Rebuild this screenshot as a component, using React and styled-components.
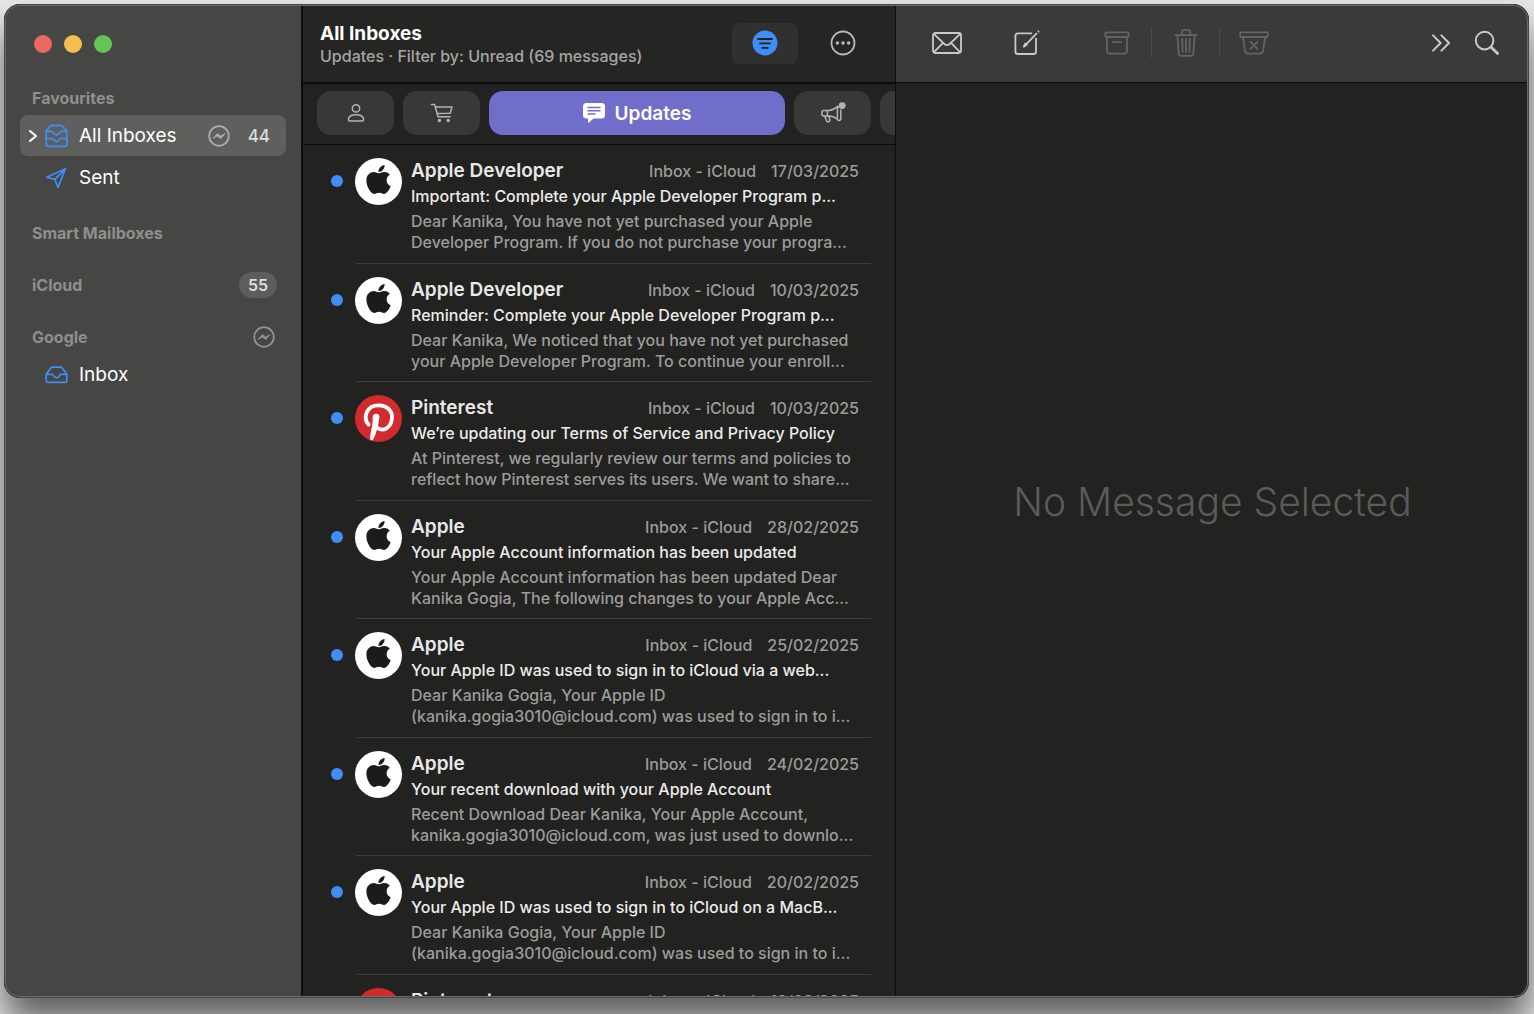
import styled, { createGlobalStyle } from "styled-components";
import { FaApple } from "react-icons/fa";

const GlobalStyle = createGlobalStyle`
* { box-sizing: border-box; }
body {
  margin: 0;
  background: #e8e8e8;
  font-family: Inter, "Liberation Sans", sans-serif;
  font-size: 16px;
  color: #fff;
  overflow: hidden;
}
button {
  border: 0;
  padding: 0;
  background: none;
  color: inherit;
  font: inherit;
}
h1, h2, h3, p, ul { margin: 0; padding: 0; }
svg { display: block; flex: none; }
`

const Desktop = styled.div`
display: flex;
height: 100vh;
padding: 4px 5px 16px 4px;
`

const Window = styled.div`
position: relative;
display: flex;
flex: 1;
min-width: 0;
overflow: hidden;
border-radius: 16px;
background: #222221;
box-shadow: 0 24px 36px rgba(0, 0, 0, 0.6);

&::after {
  content: "";
  position: absolute;
  inset: 0;
  border-radius: 16px;
  border: 1px solid #484847;
  box-shadow: inset 0 0 0 1px #6a6a69;
  pointer-events: none;
}
`

/* sidebar */

const Sidebar = styled.nav`
flex: none;
width: 299px;
background: #464645;
border-right: 2px solid #0c0c0c;
`

const Lights = styled.div`
display: flex;
gap: 12px;
height: 59px;
padding: 31px 0 0 30px;
`

const Light = styled.button`
width: 18px;
height: 18px;
border-radius: 50%;
background: ${({ $color }) => $color};
`

const SectionHead = styled.div`
display: flex;
align-items: center;
justify-content: space-between;
height: 34px;
margin-top: 18px;
padding: 0 26px 0 28px;
color: #8f8f8e;

h2 {
  font-size: 16px;
  font-weight: 700;
}
`

const Item = styled.a`
display: flex;
align-items: center;
height: 41px;
margin: 0 15px 0 16px;
padding: 0 16px 0 8px;
border-radius: 8px;
background: ${({ $selected }) => ($selected ? "#5f5f5e" : "transparent")};
color: #fff;
font-size: 19px;
text-decoration: none;
margin-bottom: ${({ $selected }) => ($selected ? "1px" : "0")};
`

const Arrow = styled.span`
width: 17px;
`

const ItemLabel = styled.span`
flex: 1;
margin-left: 11px;
`

const Count = styled.span`
margin-left: 18px;
color: #dcdcdc;
font-size: 17px;
font-weight: 500;
`

const Pill = styled.span`
padding: 0 9px;
margin-right: -2px;
border-radius: 13px;
background: #5d5d5c;
color: #dcdcdc;
font-size: 16px;
font-weight: 600;
line-height: 26px;
`

/* message list */

const ListPane = styled.section`
flex: none;
width: 593px;
overflow: hidden;
border-right: 1px solid #0c0c0c;
`

const ListHeader = styled.header`
display: flex;
align-items: center;
height: 80px;
padding: 0 38px 0 17px;
border-bottom: 2px solid #0c0c0c;
background: #252524;
`

const Heading = styled.div`
flex: 1;
padding-top: 4px;

h1 {
  font-size: 19px;
  font-weight: 700;
  line-height: 22px;
}
p {
  color: #a6a6a5;
  font-weight: 500;
  line-height: 22px;
}
`

const FilterButton = styled.button`
display: flex;
align-items: center;
justify-content: center;
width: 66px;
height: 41px;
margin-right: 31px;
border-radius: 8px;
background: #30302f;
`

const Tabs = styled.div`
display: flex;
gap: 9px;
height: 61px;
padding: 7px 0 0 14px;
overflow: hidden;
border-bottom: 1px solid #0c0c0c;
`

const Tab = styled.button`
display: flex;
flex: none;
align-items: center;
justify-content: center;
gap: 10px;
width: ${({ $active }) => ($active ? "296px" : "77px")};
height: 44px;
border-radius: 14px;
background: ${({ $active }) => ($active ? "#706dcb" : "#383837")};
color: ${({ $active }) => ($active ? "#fff" : "#b4b4b3")};
font-size: 19px;
font-weight: 600;
`

const Messages = styled.ul`
list-style: none;
`

const Row = styled.li`
display: flex;
padding: 13px 24px 0 28px;

&:nth-child(even) article {
  padding-bottom: 9px;
}
`

const Unread = styled.span`
flex: none;
width: 12px;
height: 12px;
margin: 17px 12px 0 0;
border-radius: 50%;
background: #3f8ef8;
`

const Avatar = styled.span`
display: flex;
flex: none;
align-items: center;
justify-content: center;
width: 47px;
height: 47px;
padding-bottom: ${({ $brand }) => ($brand === "apple" ? "4px" : "0")};
border-radius: 50%;
background: ${({ $brand }) => ($brand === "pinterest" ? "#d32a2e" : "#fff")};
color: #1b1b1b;
`

const Body = styled.article`
position: relative;
flex: 1;
min-width: 0;
padding: 0 12px 10px 9px;
border-bottom: 1px solid #3d3d3c;

/* the rule under a message runs on below its avatar */
&::before {
  content: "";
  position: absolute;
  bottom: -1px;
  left: -46px;
  width: 46px;
  height: 1px;
  background: #3d3d3c;
}
`

const Top = styled.div`
display: flex;
align-items: baseline;
height: 25px;
line-height: 25px;
color: #9c9c9b;
font-weight: 500;

h3 {
  flex: 1;
  color: #e8e8e7;
  font-size: 19px;
  font-weight: 600;
}
time { margin-left: 15px; }
`

const Subject = styled.p`
color: #ececeb;
font-weight: 500;
line-height: 26px;
white-space: nowrap;
`

const Preview = styled.p`
margin-top: 2px;
color: #9c9c9b;
font-weight: 500;
line-height: 21px;
white-space: pre;
`

/* reader */

const Reader = styled.main`
display: flex;
flex: 1;
flex-direction: column;
min-width: 0;
`

const Toolbar = styled.header`
display: flex;
align-items: center;
height: 79px;
padding: 0 19px 0 11px;
border-bottom: 1px solid #0c0c0c;
background: #3a3a39;
`

const Tool = styled.button`
display: flex;
align-items: center;
justify-content: center;
width: ${({ $width }) => $width}px;
height: 40px;
color: ${({ disabled }) => (disabled ? "#646463" : "#c9c9c8")};
`

const Divider = styled.span`
width: 1px;
height: 30px;
background: #4a4a49;
`

const Space = styled.span`
flex: ${({ $size }) => ($size ? `0 0 ${$size}px` : 1)};
`

const Empty = styled.div`
display: flex;
flex: 1;
align-items: center;
justify-content: center;
padding-bottom: 78px;
color: #5b5b5a;
font-size: 39px;
font-weight: 300;
`

const Icon = ({ w, h, stroke = 2, color = "currentColor", children }) => (
  <svg width={w} height={h} viewBox={`0 0 ${w} ${h}`} fill="none" stroke={color}
    strokeWidth={stroke} strokeLinecap="round" strokeLinejoin="round" aria-hidden="true">
    {children}
  </svg>
);

const BLUE = "#3f8ef8";

const TrayIcon = () => (
  <Icon w={23} h={18} stroke={1.7} color={BLUE}>
    <path d="M1.2 8.2 5.6 2.2Q6.3 1.2 7.5 1.2H15.5Q16.7 1.2 17.4 2.2L21.8 8.2V14.2Q21.8 16.4 19.6 16.4H3.4Q1.2 16.4 1.2 14.2ZM1.2 8.4H7.2C8.6 8.4 8.6 11.8 11.5 11.8S14.4 8.4 15.8 8.4H21.8" />
  </Icon>
);

const TraysIcon = () => (
  <Icon w={23} h={24} stroke={1.7} color={BLUE}>
    <path d="M1.2 7 5.2 2.4Q6 1.3 7.3 1.3H15.7Q17 1.3 17.8 2.4L21.8 7V20.2Q21.8 22.4 19.6 22.4H3.4Q1.2 22.4 1.2 20.2Z" />
    <path d="M1.2 7.4H6.8C8.6 7.4 8.2 10.8 11.5 10.8S14.4 7.4 16.2 7.4H21.8M1.2 14.6H7.4C8.8 14.6 8.8 17.6 11.5 17.6S14.2 14.6 15.6 14.6H21.8" />
  </Icon>
);

const SentIcon = () => (
  <Icon w={23} h={22} stroke={1.7} color={BLUE}>
    <path d="M20.5 1.8 1.8 10.2 9.8 12.4 13 20.4ZM20.5 1.8 9.8 12.4" />
  </Icon>
);

const StatusIcon = ({ color }) => (
  <Icon w={22} h={22} stroke={1.8} color={color}>
    <circle cx="11" cy="11" r="9.8" />
    <path d="M5.4 13.2 9.2 8.8 12.8 11.2 16.8 8.8 12.8 13.4 9.4 11.1Z" fill={color} strokeWidth="1" />
  </Icon>
);

const PinterestMark = () => (
  <Icon w={47} h={47} stroke={3.8} color="#fff">
    <path d="M13.6 29.6C10.6 26.4 9.8 21.4 12 16.8 14.6 12 19.2 10.2 24.2 10.4 31.6 10.6 37.2 15.2 37 22.2 36.8 29.4 32.6 34.8 27 34.6 24.2 34.5 21.8 33 20.8 30.6" />
    <path d="M17.6 22C17.8 17.8 24.6 17.4 24.4 22 24 27 21.4 38.6 18.6 43.8 17.4 45.8 15.2 45.8 15.2 43.8 14.8 38.6 18.6 28 17.6 22Z" fill="#fff" stroke="none" />
  </Icon>
);

const MESSAGES = [
  ["apple", "Apple Developer", "17/03/2025", "Important: Complete your Apple Developer Program p...",
    "Dear Kanika, You have not yet purchased your Apple\nDeveloper Program. If you do not purchase your progra..."],
  ["apple", "Apple Developer", "10/03/2025", "Reminder: Complete your Apple Developer Program p...",
    "Dear Kanika, We noticed that you have not yet purchased\nyour Apple Developer Program. To continue your enroll..."],
  ["pinterest", "Pinterest", "10/03/2025", "We’re updating our Terms of Service and Privacy Policy",
    "At Pinterest, we regularly review our terms and policies to\nreflect how Pinterest serves its users. We want to share..."],
  ["apple", "Apple", "28/02/2025", "Your Apple Account information has been updated",
    "Your Apple Account information has been updated Dear\nKanika Gogia, The following changes to your Apple Acc..."],
  ["apple", "Apple", "25/02/2025", "Your Apple ID was used to sign in to iCloud via a web...",
    "Dear Kanika Gogia, Your Apple ID\n(kanika.gogia3010@icloud.com) was used to sign in to i..."],
  ["apple", "Apple", "24/02/2025", "Your recent download with your Apple Account",
    "Recent Download Dear Kanika, Your Apple Account,\nkanika.gogia3010@icloud.com, was just used to downlo..."],
  ["apple", "Apple", "20/02/2025", "Your Apple ID was used to sign in to iCloud on a MacB...",
    "Dear Kanika Gogia, Your Apple ID\n(kanika.gogia3010@icloud.com) was used to sign in to i..."],
  ["pinterest", "Pinterest", "18/02/2025", "", ""],
];

const Message = ({ brand, from, date, subject, preview }) => (
  <Row>
    <Unread />
    <Avatar $brand={brand}>
      {brand === "apple" ? <FaApple size={33} /> : <PinterestMark />}
    </Avatar>
    <Body>
      <Top>
        <h3>{from}</h3>
        <span>Inbox - iCloud</span>
        <time>{date}</time>
      </Top>
      <Subject>{subject}</Subject>
      <Preview>{preview}</Preview>
    </Body>
  </Row>
);

const MailSidebar = () => (
  <Sidebar>
    <Lights>
      <Light $color="#ea6962" aria-label="Close" />
      <Light $color="#f5bf4f" aria-label="Minimise" />
      <Light $color="#62c554" aria-label="Zoom" />
    </Lights>
    <SectionHead><h2>Favourites</h2></SectionHead>
    <Item href="#all" $selected>
      <Arrow>
        <Icon w={10} h={14}><path d="M2 2 8 7 2 12" /></Icon>
      </Arrow>
      <TraysIcon />
      <ItemLabel>All Inboxes</ItemLabel>
      <StatusIcon color="#acacab" />
      <Count>44</Count>
    </Item>
    <Item href="#sent">
      <Arrow />
      <SentIcon />
      <ItemLabel>Sent</ItemLabel>
    </Item>
    <SectionHead><h2>Smart Mailboxes</h2></SectionHead>
    <SectionHead><h2>iCloud</h2><Pill>55</Pill></SectionHead>
    <SectionHead><h2>Google</h2><StatusIcon color="#929291" /></SectionHead>
    <Item href="#inbox">
      <Arrow />
      <TrayIcon />
      <ItemLabel>Inbox</ItemLabel>
    </Item>
  </Sidebar>
);

const CategoryTabs = () => (
  <Tabs>
    <Tab aria-label="Primary">
      <Icon w={18} h={20} stroke={1.5}>
        <circle cx="9" cy="5.4" r="3.7" />
        <path d="M1.4 16.4C1.6 13.4 4.8 11.8 9 11.8S16.4 13.4 16.6 16.4Q16.6 18 15 18H3Q1.4 18 1.4 16.4Z" />
      </Icon>
    </Tab>
    <Tab aria-label="Transactions">
      <Icon w={24} h={20} stroke={1.5}>
        <path d="M1.4 1.4H4.6L8 13.8H20M5.6 4H22L20.2 10.2 7.2 10.6" />
        <circle cx="9.4" cy="17.6" r="1" fill="currentColor" />
        <circle cx="18.2" cy="17.6" r="1" fill="currentColor" />
      </Icon>
    </Tab>
    <Tab $active>
      <svg width="22" height="20" viewBox="0 0 22 20" aria-hidden="true">
        <path d="M3.5 0H18.5Q22 0 22 3.5V12Q22 15.5 18.5 15.5H10.5L6 19.6Q5 20.2 5 19V15.5H3.5Q0 15.5 0 12V3.5Q0 0 3.5 0Z" fill="#fff" />
        <path d="M5 4.5H17M5 7.8H17M5 11H12" stroke="#706dcb" strokeWidth="1.4" strokeLinecap="round" />
      </svg>
      Updates
    </Tab>
    <Tab aria-label="Promotions">
      <Icon w={26} h={22} stroke={1.5}>
        <path d="M3.6 8.4H8.6C12 8.4 15 6.6 17.4 4.4V17.2C15 15.2 12 14 8.6 14H3.6Q1.8 14 1.8 11.2T3.6 8.4ZM7.4 8.6V13.8M4.8 14.2 6.4 18.6Q7 20.2 8.6 19.8T9.8 17.8L8.8 14.2M17.4 5.8 18.6 4.8M17.4 17.6Q18 18.4 19 18.4 20.8 18.4 20.8 16.6V8" />
        <circle cx="22.2" cy="3.6" r="2.7" fill="currentColor" />
      </Icon>
    </Tab>
    <Tab aria-label="All mail" />
  </Tabs>
);

const MessageList = () => (
  <ListPane>
    <ListHeader>
      <Heading>
        <h1>All Inboxes</h1>
        <p>Updates · Filter by: Unread (69 messages)</p>
      </Heading>
      <FilterButton aria-label="Filter">
        <svg width="26" height="26" viewBox="0 0 26 26" aria-hidden="true">
          <circle cx="13" cy="13" r="12.5" fill={BLUE} />
          <path d="M6 9H20M8 13.4H18M10.2 17.8H15.8" stroke="#222" strokeWidth="1.8" strokeLinecap="round" />
        </svg>
      </FilterButton>
      <button aria-label="More">
        <svg width="28" height="28" viewBox="0 0 28 28" fill="#b8b8b7" aria-hidden="true">
          <circle cx="14" cy="14" r="11.5" fill="none" stroke="#b8b8b7" strokeWidth="1.8" />
          <circle cx="8.4" cy="14" r="1.8" />
          <circle cx="14" cy="14" r="1.8" />
          <circle cx="19.6" cy="14" r="1.8" />
        </svg>
      </button>
    </ListHeader>
    <CategoryTabs />
    <Messages>
      {MESSAGES.map(([brand, from, date, subject, preview]) => (
        <Message key={from + date} brand={brand} from={from} date={date} subject={subject} preview={preview} />
      ))}
    </Messages>
  </ListPane>
);

const MessageReader = () => (
  <Reader>
    <Toolbar>
      <Tool $width={80} aria-label="Get mail">
        <Icon w={30} h={22} stroke={1.8}>
          <rect x="1" y="1" width="28" height="20" rx="2.4" />
          <path d="M1.8 1.8 12.4 12Q15 14.2 17.6 12L28.2 1.8M2 20.2 11 10.8M28 20.2 19 10.8" />
        </Icon>
      </Tool>
      <Tool $width={80} aria-label="New message">
        <Icon w={26} h={26} stroke={1.8}>
          <path d="M17.4 3.4H4Q1.4 3.4 1.4 6V21.4Q1.4 24 4 24H19.4Q22 24 22 21.4V8.6M10 16.6 22.4 3.6" />
          <path d="M9.8 16.6 11.4 13.4 12.8 14.8ZM24.4 1.4 24.6 1.6" />
        </Icon>
      </Tool>
      <Space $size={16} />
      <Tool $width={68} disabled aria-label="Archive">
        <Icon w={26} h={24} stroke={1.8}>
          <rect x="1.4" y="1.4" width="23.2" height="4.6" rx="1" />
          <path d="M3 6V19.8Q3 22.6 5.8 22.6H20.2Q23 22.6 23 19.8V6M8.8 11.2H17.2" />
        </Icon>
      </Tool>
      <Divider />
      <Tool $width={67} disabled aria-label="Delete">
        <Icon w={24} h={28} stroke={1.8}>
          <path d="M1.4 6.2H22.6M7.8 6V3Q7.8 1.2 9.6 1.2H14.4Q16.2 1.2 16.2 3V6M3.4 6.4 4.6 24Q4.8 26.8 7.4 26.8H16.6Q19.2 26.8 19.4 24L20.6 6.4M8.2 9.8 8.6 22.8M12 9.8V22.8M15.8 9.8 15.4 22.8" />
        </Icon>
      </Tool>
      <Divider />
      <Tool $width={67} disabled aria-label="Junk">
        <Icon w={30} h={24} stroke={1.8}>
          <rect x="1.2" y="1.4" width="27.6" height="4.6" rx="1" />
          <path d="M3.8 6 6 19.8Q6.4 22.6 9.2 22.6H20.8Q23.6 22.6 24 19.8L26.2 6M11.4 10.6 18.6 17.8M18.6 10.6 11.4 17.8" />
        </Icon>
      </Tool>
      <Space />
      <Tool $width={46} aria-label="More actions">
        <Icon w={20} h={18}><path d="M2 1.4 9.6 9 2 16.6M10.4 1.4 18 9 10.4 16.6" /></Icon>
      </Tool>
      <Tool $width={46} aria-label="Search">
        <Icon w={26} h={26}>
          <circle cx="10.6" cy="10.6" r="8.8" />
          <path d="M17.2 17.2 23.6 23.6" strokeWidth="2.8" />
        </Icon>
      </Tool>
    </Toolbar>
    <Empty>No Message Selected</Empty>
  </Reader>
);

const App = () => (
  <>
    <GlobalStyle />
    <Desktop>
      <Window>
        <MailSidebar />
        <MessageList />
        <MessageReader />
      </Window>
    </Desktop>
  </>
);

export default App;
